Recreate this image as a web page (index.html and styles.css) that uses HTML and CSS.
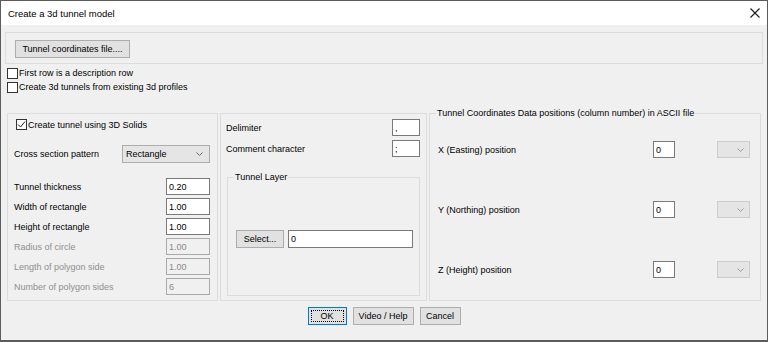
FILE: index.html
```html
<!DOCTYPE html>
<html>
<head>
<meta charset="utf-8">
<title>Create a 3d tunnel model</title>
<link rel="stylesheet" href="styles.css">
</head>
<body>
<div class="window">
  <header class="titlebar">
    <span class="title">Create a 3d tunnel model</span>
    <svg class="close" width="10" height="10" viewBox="0 0 10 10"><path d="M0.5 0.5 L9.5 9.5 M9.5 0.5 L0.5 9.5" stroke="#1a1a1a" stroke-width="1.1" fill="none"/></svg>
  </header>
  <main class="content">
    <div class="file-group"><button class="btn btn-file">Tunnel coordinates file....</button></div>
    <label class="check check-top first"><span class="box"></span><span>First row is a description row</span></label>
    <label class="check check-top"><span class="box"></span><span>Create 3d tunnels from existing 3d profiles</span></label>

    <div class="panels">
      <section class="panel panel-left">
        <label class="check check-solids"><span class="box"><svg width="9" height="9" viewBox="0 0 9 9"><path d="M1 4.5 L3.5 7 L8 1.5" stroke="#222" stroke-width="1" fill="none"/></svg></span><span>Create tunnel using 3D Solids</span></label>
        <div class="row row-combo">
          <span class="lbl">Cross section pattern</span>
          <div class="combo combo-pattern"><span>Rectangle</span><svg class="chev" width="7" height="4" viewBox="0 0 7 4"><path d="M0.5 0.5 L3.5 3.5 L6.5 0.5" stroke="#6a6a6a" fill="none"/></svg></div>
        </div>
        <div class="dims">
          <div class="row"><span class="lbl">Tunnel thickness</span><input class="field field-dim" value="0.20"></div>
          <div class="row"><span class="lbl">Width of rectangle</span><input class="field field-dim" value="1.00"></div>
          <div class="row"><span class="lbl">Height of rectangle</span><input class="field field-dim" value="1.00"></div>
          <div class="row off"><span class="lbl">Radius of circle</span><input class="field field-dim" value="1.00" disabled></div>
          <div class="row off"><span class="lbl">Length of polygon side</span><input class="field field-dim" value="1.00" disabled></div>
          <div class="row off"><span class="lbl">Number of polygon sides</span><input class="field field-dim" value="6" disabled></div>
        </div>
      </section>

      <section class="panel panel-mid">
        <div class="row"><span class="lbl">Delimiter</span><input class="field field-char" value=","></div>
        <div class="row row-comment"><span class="lbl">Comment character</span><input class="field field-char" value=";"></div>
        <fieldset class="layer">
          <legend>Tunnel Layer</legend>
          <div class="layer-body">
            <button class="btn btn-select">Select...</button>
            <input class="field field-layer" value="0">
          </div>
        </fieldset>
      </section>

      <fieldset class="panel-right">
        <legend>Tunnel Coordinates Data positions (column number) in ASCII file</legend>
        <div class="coords">
          <div class="row"><span class="lbl">X (Easting) position</span><input class="field field-col" value="0"><div class="combo combo-off"><svg class="chev" width="7" height="4" viewBox="0 0 7 4"><path d="M0.5 0.5 L3.5 3.5 L6.5 0.5" stroke="#9a9a9a" fill="none"/></svg></div></div>
          <div class="row"><span class="lbl">Y (Northing) position</span><input class="field field-col" value="0"><div class="combo combo-off"><svg class="chev" width="7" height="4" viewBox="0 0 7 4"><path d="M0.5 0.5 L3.5 3.5 L6.5 0.5" stroke="#9a9a9a" fill="none"/></svg></div></div>
          <div class="row"><span class="lbl">Z (Height) position</span><input class="field field-col" value="0"><div class="combo combo-off"><svg class="chev" width="7" height="4" viewBox="0 0 7 4"><path d="M0.5 0.5 L3.5 3.5 L6.5 0.5" stroke="#9a9a9a" fill="none"/></svg></div></div>
        </div>
      </fieldset>
    </div>

    <div class="actions">
      <button class="btn btn-ok">OK</button>
      <button class="btn btn-help">Video / Help</button>
      <button class="btn btn-cancel">Cancel</button>
    </div>
  </main>
</div>
</body>
</html>
```
FILE: styles.css
```css
* { box-sizing: border-box; }
html, body { margin: 0; padding: 0; }
body {
  width: 768px;
  height: 342px;
  overflow: hidden;
  background: #f0f0f0;
  font-family: "Liberation Sans", Arial, sans-serif;
  font-size: 9px;
  color: #000;
}
.window {
  width: 768px;
  height: 342px;
  border: 1px solid #5c5c5c;
  border-bottom-width: 2px;
  background: #f0f0f0;
  display: flex;
  flex-direction: column;
}
.titlebar {
  height: 24px;
  flex: none;
  background: #fff;
  display: flex;
  align-items: center;
  justify-content: space-between;
  padding: 0 7px 0 7px;
}
.title { font-size: 9.5px; color: #000; }
.close { display: block; margin-top: 0; }

.content {
  flex: 1;
  padding: 0 4px;
  display: flex;
  flex-direction: column;
}
.file-group {
  margin-top: 7px;
  height: 32px;
  border: 1px solid #dcdcdc;
  padding: 7px 0 0 9px;
}
.btn {
  font-family: "Liberation Sans", Arial, sans-serif;
  font-size: 9px;
  color: #000;
  background: #e1e1e1;
  border: 1px solid #adadad;
  height: 18px;
  padding: 0;
  margin: 0;
  display: block;
}
.btn-file { width: 115px; }

.check {
  display: flex;
  align-items: center;
  gap: 1px;
  white-space: nowrap;
}
.box {
  width: 11px;
  height: 11px;
  border: 1px solid #333;
  background: #fff;
  flex: none;
  display: flex;
  align-items: center;
  justify-content: center;
}
.box svg { display: block; }
.check-top { height: 14px; margin-left: 2px; }
.check-top.first { margin-top: 2px; }

.panels {
  margin-top: 19px;
  margin-left: 2px;
  display: flex;
  align-items: flex-start;
  gap: 2px;
}
.panel {
  height: 188px;
  border: 1px solid #dcdcdc;
  flex: none;
}
.row {
  display: flex;
  align-items: center;
  justify-content: space-between;
  height: 17px;
  white-space: nowrap;
}
.field {
  font-family: "Liberation Sans", Arial, sans-serif;
  font-size: 9px;
  color: #000;
  background: #fff;
  border: 1px solid #7a7a7a;
  height: 17px;
  padding: 0 0 0 2px;
  margin: 0;
  outline: none;
  flex: none;
}
.field:disabled {
  background: #f0f0f0;
  border-color: #a9a9a9;
  color: #8a8a8a;
}
.off .lbl { color: #8f8f8f; }

.panel-left { width: 211px; padding: 5px 7px 0 6px; }
.check-solids { height: 11px; margin-left: 2px; }
.row-combo { margin-top: 15px; height: 18px; }
.combo {
  display: flex;
  align-items: center;
  justify-content: space-between;
  flex: none;
}
.combo-pattern {
  width: 88px;
  height: 18px;
  background: #e5e5e5;
  border: 1px solid #adadad;
  padding: 0 6px 0 3px;
}
.chev { display: block; }
.dims {
  margin-top: 15px;
  display: flex;
  flex-direction: column;
  gap: 3px;
}
.field-dim { width: 44px; }

.panel-mid { width: 207px; padding: 5px 6px 0 5px; }
.field-char { width: 28px; }
.row-comment { margin-top: 4px; }
.layer {
  margin: 15px 0 0 1px;
  width: 193px;
  height: 124px;
  border: 1px solid #dcdcdc;
  padding: 0;
  min-width: 0;
}
legend {
  margin-left: 6px;
  padding: 0 1px;
  line-height: 10px;
  font-size: 9px;
  white-space: nowrap;
}
.layer-body {
  padding: 48px 0 0 8px;
  display: flex;
  gap: 4px;
}
.btn-select { width: 48px; }
.field-layer { width: 125px; height: 18px; }

.panel-right {
  margin: -5px 0 0 0;
  width: 332px;
  height: 193px;
  border: 1px solid #dcdcdc;
  padding: 0;
  min-width: 0;
  flex: none;
}
.coords {
  padding: 23px 10px 0 8px;
  display: flex;
  flex-direction: column;
  gap: 43px;
}
.coords .lbl { flex: 1; }
.field-col { width: 22px; margin-right: 42px; }
.combo-off {
  width: 33px;
  height: 17px;
  background: #e5e5e5;
  border: 1px solid #cccccc;
  justify-content: flex-end;
  padding-right: 5px;
}

.actions {
  margin-top: 6px;
  display: flex;
  justify-content: center;
  gap: 6px;
}
.btn-ok {
  width: 39px;
  border-color: #0078d7;
  outline: 1px dotted #000;
  outline-offset: -4px;
}
.btn-help { width: 61px; }
.btn-cancel { width: 41px; }
```
